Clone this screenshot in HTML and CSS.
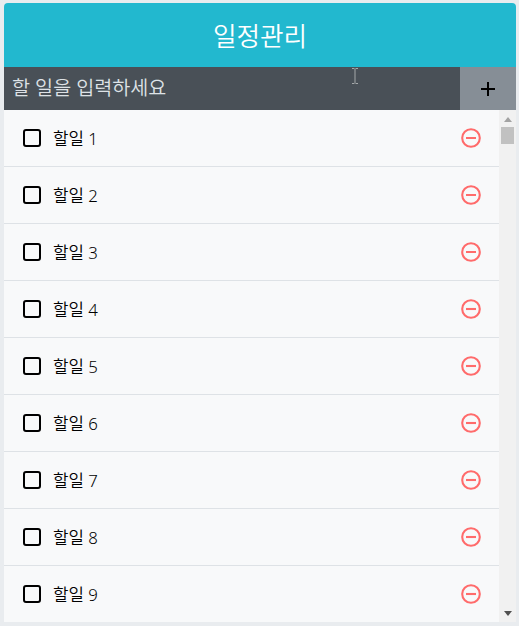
FILE: index.html
```html
<!DOCTYPE html>
<html lang="ko">
<head>
    <meta charset="UTF-8">
    <meta name="viewport" content="width=device-width, initial-scale=1.0">
    <title>일정관리</title>
    <link rel="stylesheet" href="styles.css">
</head>
<body>
    <div class="app">
        <div class="app-title">일정관리</div>

        <!-- Input -->
        <form class="insert">
            <input type="text" class="insert-input" placeholder="할 일을 입력하세요">
            <button type="button" class="insert-btn">
                <svg viewBox="0 0 16 16" width="16" height="16"><path d="M8 1v14M1 8h14" stroke="#000" stroke-width="2" fill="none"/></svg>
            </button>
            <svg class="ibeam" viewBox="0 0 8 16" width="8" height="16"><path d="M1 .5h2.500M4.500 .5H7M4 1v14M1 15.500h2.500M4.500 15.500H7" stroke="#a5a8aa" fill="none"/></svg>
        </form>

        <!-- List -->
        <div class="list">
            <div class="rows">
                <div class="item"><span class="check"></span><span class="text">할일 1</span><svg class="remove" viewBox="0 0 20 20" width="20" height="20"><circle cx="10" cy="10" r="8.800"/><path d="M5 10h10"/></svg></div>
                <div class="item"><span class="check"></span><span class="text">할일 2</span><svg class="remove" viewBox="0 0 20 20" width="20" height="20"><circle cx="10" cy="10" r="8.800"/><path d="M5 10h10"/></svg></div>
                <div class="item"><span class="check"></span><span class="text">할일 3</span><svg class="remove" viewBox="0 0 20 20" width="20" height="20"><circle cx="10" cy="10" r="8.800"/><path d="M5 10h10"/></svg></div>
                <div class="item"><span class="check"></span><span class="text">할일 4</span><svg class="remove" viewBox="0 0 20 20" width="20" height="20"><circle cx="10" cy="10" r="8.800"/><path d="M5 10h10"/></svg></div>
                <div class="item"><span class="check"></span><span class="text">할일 5</span><svg class="remove" viewBox="0 0 20 20" width="20" height="20"><circle cx="10" cy="10" r="8.800"/><path d="M5 10h10"/></svg></div>
                <div class="item"><span class="check"></span><span class="text">할일 6</span><svg class="remove" viewBox="0 0 20 20" width="20" height="20"><circle cx="10" cy="10" r="8.800"/><path d="M5 10h10"/></svg></div>
                <div class="item"><span class="check"></span><span class="text">할일 7</span><svg class="remove" viewBox="0 0 20 20" width="20" height="20"><circle cx="10" cy="10" r="8.800"/><path d="M5 10h10"/></svg></div>
                <div class="item"><span class="check"></span><span class="text">할일 8</span><svg class="remove" viewBox="0 0 20 20" width="20" height="20"><circle cx="10" cy="10" r="8.800"/><path d="M5 10h10"/></svg></div>
                <div class="item"><span class="check"></span><span class="text">할일 9</span><svg class="remove" viewBox="0 0 20 20" width="20" height="20"><circle cx="10" cy="10" r="8.800"/><path d="M5 10h10"/></svg></div>
            </div>

            <!-- Scrollbar -->
            <div class="scrollbar">
                <svg class="arrow-up" viewBox="0 0 8 5" width="8" height="5"><path d="M4 0l4 5H0z"/></svg>
                <div class="thumb"></div>
                <svg class="arrow-down" viewBox="0 0 8 5" width="8" height="5"><path d="M4 5l4-5H0z"/></svg>
            </div>
        </div>
    </div>
</body>
</html>
```

FILE: styles.css
```css
html, body {
    height: 100%;
}

body {
    margin: 0;
    padding: 3px 3px 4px 4px;
    box-sizing: border-box;
    background-color: #e9ecef;
    font-family: "Noto Sans", "Noto Sans CJK KR", sans-serif;
    font-weight: 350;
    overflow: hidden;
}

.app {
    width: 512px;
    border-radius: 4px 4px 0 0;
    overflow: hidden;
}

.app-title {
    height: 64px;
    background-color: #22b8cf;
    color: white;
    font-size: 25.6px;
    display: flex;
    align-items: center;
    justify-content: center;
}

.insert {
    position: relative;
    display: flex;
    height: 43px;
    margin: 0;
    background-color: #495057;
}

.insert-input {
    flex: 1;
    min-width: 0;
    padding: 0 8px 2px;
    border: none;
    outline: none;
    background: none;
    color: white;
    font-family: inherit;
    font-weight: inherit;
    font-size: 19.6px;
}

.insert-input::placeholder {
    color: #dee2e6;
    opacity: 1;
}

.insert-btn {
    width: 56px;
    padding: 0;
    border: none;
    background-color: #868e96;
    display: flex;
    align-items: center;
    justify-content: center;
}

.ibeam {
    position: absolute;
    left: 347px;
    top: 1px;
}

.list {
    display: flex;
    height: 512px;
    overflow: hidden;
    background-color: #f8f9fa;
}

.rows {
    flex: 1;
    min-width: 0;
}

.scrollbar {
    width: 17px;
    display: flex;
    flex-direction: column;
    align-items: center;
    padding: 7px 0 6px;
    box-sizing: border-box;
    background-color: #f1f1f1;
}

.thumb {
    width: 13px;
    height: 17px;
    margin-top: 5px;
    background-color: #c1c1c1;
}

.arrow-up {
    fill: #a3a3a3;
}

.arrow-down {
    margin-top: auto;
    fill: #505050;
}

.item {
    display: flex;
    align-items: center;
    box-sizing: border-box;
    height: 57px;
    padding: 0 18px 0 19px;
    border-bottom: 1px solid #dee2e6;
}

.check {
    box-sizing: border-box;
    width: 18px;
    height: 18px;
    border: 2px solid #000;
    border-radius: 3px;
}

.text {
    flex: 1;
    margin-left: 12px;
    font-size: 16.8px;
    color: #000;
}

.remove {
    fill: none;
    stroke: #ff6b6b;
    stroke-width: 2.1;
}
```
